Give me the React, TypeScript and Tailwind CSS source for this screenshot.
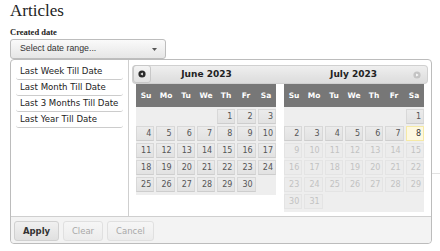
import React from "react";

type Cell = { d: number | null; disabled?: boolean; today?: boolean };

const june: Cell[][] = [
  [null, null, null, null, 1, 2, 3],
  [4, 5, 6, 7, 8, 9, 10],
  [11, 12, 13, 14, 15, 16, 17],
  [18, 19, 20, 21, 22, 23, 24],
  [25, 26, 27, 28, 29, 30, null],
].map((w) => w.map((d) => ({ d })));

const july: Cell[][] = [
  [null, null, null, null, null, null, 1],
  [2, 3, 4, 5, 6, 7, 8],
  [9, 10, 11, 12, 13, 14, 15],
  [16, 17, 18, 19, 20, 21, 22],
  [23, 24, 25, 26, 27, 28, 29],
  [30, 31, null, null, null, null, null],
].map((w) => w.map((d) => ({ d, disabled: d !== null && d > 8, today: d === 8 })));

const dayNames = ["Su", "Mo", "Tu", "We", "Th", "Fr", "Sa"];

function PrevIcon() {
  return (
    <svg width="8" height="8" viewBox="0 0 8 8">
      <circle cx="4" cy="4" r="3.6" fill="#2b2b2b" />
      <polygon points="2.4,4 4.8,2.4 4.8,5.6" fill="#fff" />
    </svg>
  );
}

function NextIcon() {
  return (
    <svg width="8" height="8" viewBox="0 0 8 8">
      <circle cx="4" cy="4" r="3.6" fill="#c4c4c4" />
      <polygon points="5.6,4 3.2,2.4 3.2,5.6" fill="#fff" />
    </svg>
  );
}

function Month({ title, weeks, side }: { title: string; weeks: Cell[][]; side: "left" | "right" }) {
  return (
    <div className="w-[148px] flex flex-col">
      <div
        className={
          side === "left"
            ? "relative h-[19px] flex items-center justify-center bg-gradient-to-b from-[#efefef] to-[#dcdcdc] border border-r-0 border-[#d0d0d0] rounded-l-[4px]"
            : "relative h-[19px] flex items-center justify-center bg-gradient-to-b from-[#efefef] to-[#dcdcdc] border border-l-0 border-[#d0d0d0] rounded-r-[4px]"
        }
      >
        {side === "left" ? (
          <div className="absolute left-[0px] top-[-1px] w-[18px] h-[18px] flex items-center justify-center rounded-[3px] border border-[#c8c8c8] bg-gradient-to-b from-[#f4f4f4] to-[#e2e2e2]">
            <PrevIcon />
          </div>
        ) : (
          <div className="absolute right-[6px] top-[4px] w-[9px] h-[9px] flex items-center justify-center">
            <NextIcon />
          </div>
        )}
        <span className="text-[9px] font-bold text-[#222] leading-none">{title}</span>
      </div>
      <div className="mx-[4px] w-[140px]">
        <div className="grid grid-cols-7 h-[23px] bg-[#777777] items-center">
          {dayNames.map((n) => (
            <span key={n} className="text-center text-[7.5px] font-bold text-white leading-none">
              {n}
            </span>
          ))}
        </div>
        <div className="grid grid-cols-7 gap-[2px] pt-[2px] pb-[3px] bg-[#eeeeee]">
          {weeks.flat().map((c, i) =>
            c.d === null ? (
              <div key={i} className="h-[15px]" />
            ) : c.today ? (
              <div
                key={i}
                className="h-[15px] flex items-center justify-end pr-[2px] text-[8px] leading-none text-[#363636] bg-[#fdf8e1] border border-[#f5e9a6]"
              >
                {c.d}
              </div>
            ) : c.disabled ? (
              <div
                key={i}
                className="h-[15px] flex items-center justify-end pr-[2px] text-[8px] leading-none text-[#c2c2c2] bg-[#ececec] border border-[#e4e4e4]"
              >
                {c.d}
              </div>
            ) : (
              <div
                key={i}
                className="h-[15px] flex items-center justify-end pr-[2px] text-[8px] leading-none text-[#555555] bg-gradient-to-b from-[#ebebeb] to-[#e2e2e2] border border-[#d8d8d8] border-b-[#cdcdcd]"
              >
                {c.d}
              </div>
            )
          )}
        </div>
      </div>
    </div>
  );
}

const ranges = ["Last Week Till Date", "Last Month Till Date", "Last 3 Months Till Date", "Last Year Till Date"];

export default function App() {
  return (
    <div className="relative w-[440px] h-[251px] overflow-hidden bg-white">
      <div className="absolute left-[200px] right-0 top-[173px] h-px bg-[#e2e2e2]" />
      <div className="relative px-[10px]">
        <h1 className="text-[17px] leading-[22px] text-[#222] font-normal" style={{ fontFamily: '"Liberation Serif", serif' }}>
          Articles
        </h1>
        <div className="mt-[4px] text-[8.5px] leading-[12px] font-bold text-[#222]" style={{ fontFamily: '"Liberation Serif", serif' }}>
          Created date
        </div>
        <div className="mt-[1px] w-[156px] h-[20px] flex items-center justify-between pl-[9px] pr-[8px] border border-[#bdbdbd] rounded-[3px] bg-gradient-to-b from-[#fafafa] to-[#e6e6e6]">
          <span className="text-[8.8px] text-[#333]" style={{ fontFamily: '"Liberation Sans", Arial, sans-serif' }}>
            Select date range...
          </span>
          <svg width="5" height="3" viewBox="0 0 5 3">
            <polygon points="0,0 5,0 2.5,3" fill="#555" />
          </svg>
        </div>
      </div>

      <div
        className="absolute left-[10px] top-[59px] w-[422px] h-[185px] flex flex-col border border-[#bcbcbc] rounded-[4px] bg-white"
        style={{ fontFamily: '"DejaVu Sans", Verdana, sans-serif' }}
      >
        <div className="flex h-[156px]">
          <div className="w-[118px] border-r border-[#cfcfcf] pt-[4px] px-[5px] flex flex-col">
            {ranges.map((r) => (
              <div
                key={r}
                className="h-[16px] flex items-center pl-[4px] text-[8.6px] text-[#222] leading-none border-b border-[#cccccc] rounded-[3px]"
              >
                {r}
              </div>
            ))}
          </div>
          <div className="flex pl-[3px] pt-[5px]">
            <Month title="June 2023" weeks={june} side="left" />
            <Month title="July 2023" weeks={july} side="right" />
          </div>
        </div>
        <div className="flex-1 flex items-start gap-[4px] pl-[3px] pt-[4px] border-t border-[#cfcfcf] bg-[#f3f3f3] rounded-b-[4px]">
          <button className="w-[45px] h-[20px] text-[8.5px] font-bold text-[#333] border border-[#d0d0d0] rounded-[3px] bg-gradient-to-b from-[#f0f0f0] to-[#e0e0e0]">
            Apply
          </button>
          <button className="w-[40px] h-[20px] text-[8.5px] text-[#a8a8a8] border border-[#e0e0e0] rounded-[3px] bg-gradient-to-b from-[#f6f6f6] to-[#ececec]">
            Clear
          </button>
          <button className="w-[47px] h-[20px] text-[8.5px] text-[#a8a8a8] border border-[#e0e0e0] rounded-[3px] bg-gradient-to-b from-[#f6f6f6] to-[#ececec]">
            Cancel
          </button>
        </div>
      </div>
    </div>
  );
}
